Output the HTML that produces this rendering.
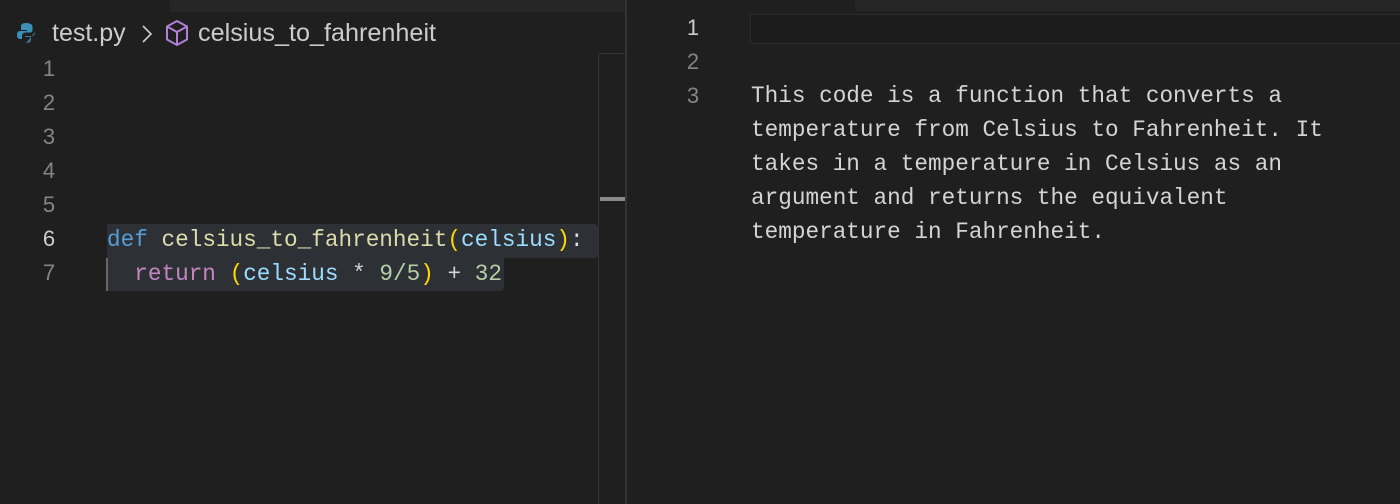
<!DOCTYPE html>
<html><head><style>
body{margin:0;width:1400px;height:504px;background:#1f1f1f;overflow:hidden;position:relative;font-family:"Liberation Mono",monospace}
.a{position:absolute}
.mono{font-family:"Liberation Mono",monospace;font-size:22.7px;white-space:pre;line-height:34px}
.ln{color:#858585;font-size:22px;font-family:"Liberation Sans",sans-serif;width:40px;text-align:center;line-height:34px}
</style></head><body>
<div class="a" style="left:170px;top:0;width:455px;height:12px;background:#262626"></div>
<div class="a" style="left:855px;top:0;width:545px;height:11px;background:#262626"></div>
<div class="a" style="left:625px;top:0;width:2px;height:504px;background:#333"></div>
<div class="a" style="left:598px;top:53px;width:1px;height:451px;background:#333"></div>
<div class="a" style="left:598px;top:53px;width:28px;height:1px;background:#333"></div>
<div class="a" style="left:600px;top:197px;width:25px;height:4px;background:#8a8a8a"></div>
<svg class="a" style="left:17px;top:22px" width="18" height="22" viewBox="0 0 18 22"><path d="M9 1c-4 0-5 1.5-5 3.5V8h6v1H3C1 9 0 10.5 0 13s1 4 3 4h2v-3c0-2 1.5-3.5 3.5-3.5H13c1.5 0 2.5-1 2.5-2.5V4.5C15.5 2.5 13 1 9 1z" fill="#3d8fb8"/><path d="M9 21c4 0 5-1.5 5-3.5V15H8v-1h7c2 0 3-1.5 3-4" fill="#3d8fb8" opacity=".8"/></svg>
<div class="a" style="left:52px;top:17px;font-family:'Liberation Sans',sans-serif;font-size:25px;color:#cccccc;line-height:32px">test.py</div>
<svg class="a" style="left:141px;top:24px" width="12" height="20"><path d="M2 2l8 8-8 8" stroke="#ccc" stroke-width="1.6" fill="none"/></svg>
<svg class="a" style="left:164px;top:19px" width="26" height="28" viewBox="0 0 26 28"><path d="M13 2L23 7.5V20.5L13 26L3 20.5V7.5Z M3 7.5L13 13L23 7.5 M13 13V26" stroke="#b180d7" stroke-width="2" fill="none" stroke-linejoin="round"/></svg>
<div class="a" style="left:198px;top:17px;font-family:'Liberation Sans',sans-serif;font-size:25.2px;color:#cccccc;line-height:32px">celsius_to_fahrenheit</div>
<div class="a ln" style="left:29px;top:52px">1<br>2<br>3<br>4<br>5<br><span style="color:#ccc">6</span><br>7</div>
<div class="a" style="left:107px;top:224px;width:491px;height:34px;background:#2d3034;border-radius:0 4px 4px 0"></div>
<div class="a" style="left:107px;top:257px;width:397px;height:34px;background:#2d3034;border-radius:0 0 4px 0"></div>
<div class="a" style="left:106px;top:258px;width:2px;height:33px;background:#666"></div>
<div class="a mono" style="left:107px;top:223px;color:#dcdcaa"><span style="color:#569cd6">def</span> celsius_to_fahrenheit<span style="color:#ffd700">(</span><span style="color:#9cdcfe">celsius</span><span style="color:#ffd700">)</span><span style="color:#ddd">:</span></div>
<div class="a mono" style="left:107px;top:257px;color:#d4d4d4">  <span style="color:#c586c0">return</span> <span style="color:#ffd700">(</span><span style="color:#9cdcfe">celsius</span> * <span style="color:#b5cea8">9/5</span><span style="color:#ffd700">)</span> + <span style="color:#b5cea8">32</span></div>
<div class="a ln" style="left:673px;top:11px"><span style="color:#ccc">1</span><br>2<br>3</div>
<div class="a" style="left:750px;top:14px;width:660px;height:28px;border:1px solid #2c2c2c;background:#1c1c1c"></div>
<div class="a mono" style="left:751px;top:79px;color:#d4d4d4">This code is a function that converts a
temperature from Celsius to Fahrenheit. It
takes in a temperature in Celsius as an
argument and returns the equivalent
temperature in Fahrenheit.</div>
</body></html>
